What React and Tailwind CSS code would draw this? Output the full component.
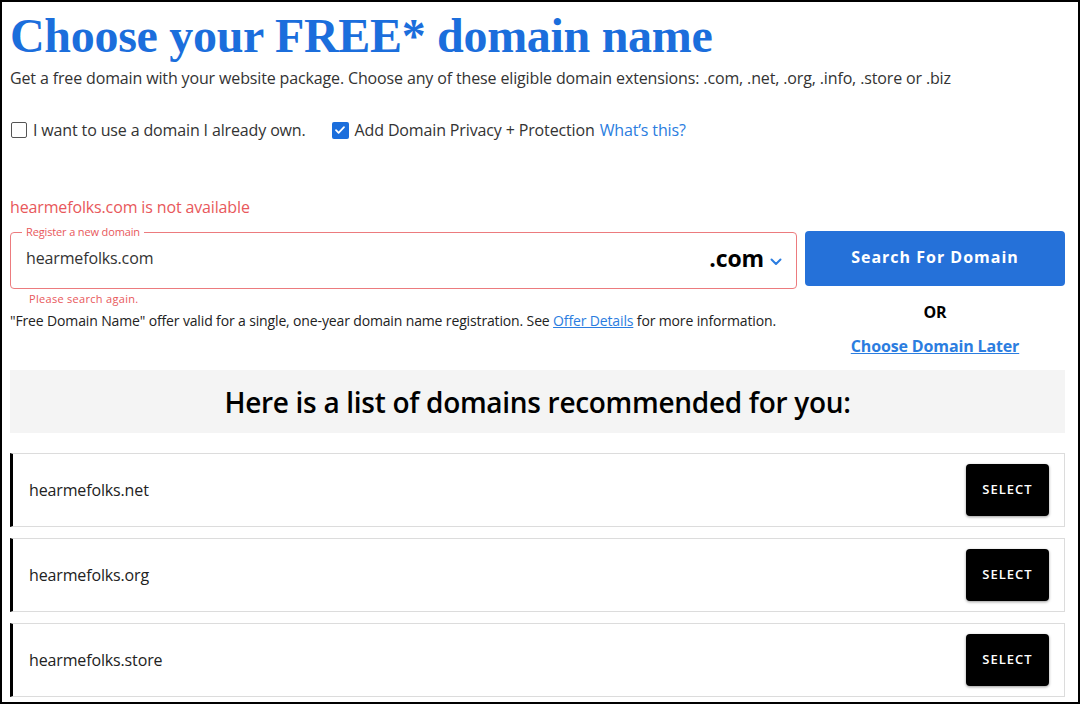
import React from "react";

const domains = ["hearmefolks.net", "hearmefolks.org", "hearmefolks.store"];

// Row for a suggested domain
const DomainRow = ({ name }) => (
  <div className="flex items-center justify-between border border-[#dcdcdc] border-l-[3px] border-l-black pl-[16px] pr-[15px] py-[10px]">
    <span className="text-[16px] text-[#222]">{name}</span>
    <button className="w-[83px] h-[52px] rounded-[4px] bg-black text-white text-[13px] font-semibold tracking-[1px] shadow-[0_1px_3px_rgba(0,0,0,0.4)]">
      SELECT
    </button>
  </div>
);

export default function App() {
  return (
    <div
      className="h-[704px] w-[1080px] overflow-hidden border-2 border-black bg-white pl-[8px] pr-[13px] text-[#333] tracking-[-0.14px]"
      style={{ fontFamily: "'Open Sans', 'Liberation Sans', sans-serif" }}
    >
      <h1
        className="mt-[6px] text-[48px] font-bold leading-[56px] text-[#1b6edc] tracking-[-0.3px]"
        style={{ fontFamily: "'Liberation Serif', serif" }}
      >
        Choose your FREE* domain name
      </h1>
      <p className="mt-[2px] text-[16px] leading-[24px]">
        Get a free domain with your website package. Choose any of these eligible domain extensions: .com, .net, .org, .info, .store or .biz
      </p>

      {/* checkboxes */}
      <div className="mt-[28px] flex items-center text-[16px] leading-[24px]">
        <label className="flex items-center">
          <span className="ml-[1px] h-[16px] w-[16px] rounded-[2px] border-[1.5px] border-[#555] bg-white" />
          <span className="ml-[6px]">I want to use a domain I already own.</span>
        </label>
        <label className="ml-[26px] flex items-center">
          <span className="flex h-[17px] w-[17px] items-center justify-center rounded-[2px] bg-[#1b6edc]">
            <svg width="12" height="12" viewBox="0 0 12 12" fill="none">
              <path d="M2 6.2l2.6 2.6L10 3.2" stroke="white" strokeWidth="1.8" strokeLinecap="round" strokeLinejoin="round" />
            </svg>
          </span>
          <span className="ml-[6px]">Add Domain Privacy + Protection</span>
          <a className="ml-[5px] text-[#2b7de0]">What’s this?</a>
        </label>
      </div>

      <p className="mt-[53px] text-[16px] leading-[24px] text-[#e8585b]">hearmefolks.com is not available</p>

      {/* search row */}
      <div className="mt-[13px] flex gap-[8px]">
        <div className="w-[787px]">
          <div className="relative flex h-[57px] items-center rounded-[4px] border border-[#ec7b7e] pb-[5px] pl-[15px] pr-[14px]">
            <span className="absolute -top-[8px] left-[11px] bg-white px-[4px] text-[11px] leading-[14px] text-[#e8585b]">
              Register a new domain
            </span>
            <span className="flex-1 text-[16px] text-[#333]">hearmefolks.com</span>
            <span className="text-[23px] font-bold text-black">.com</span>
            <svg className="ml-[6px] mt-[8px]" width="12" height="8" viewBox="0 0 12 8" fill="none">
              <path d="M1.5 1.5L6 6l4.5-4.5" stroke="#2b7de0" strokeWidth="2" strokeLinecap="round" strokeLinejoin="round" />
            </svg>
          </div>
          <p className="ml-[19px] mt-[2px] text-[11px] leading-[16px] tracking-[0.3px] text-[#e8585b]">Please search again.</p>
          <p className="mt-[4px] text-[14px] leading-[20px] text-[#222]">
            "Free Domain Name" offer valid for a single, one-year domain name registration. See{" "}
            <a className="text-[#2b7de0] underline">Offer Details</a> for more information.
          </p>
        </div>
        <div className="flex w-[260px] flex-col items-center">
          <button className="-mt-[1px] h-[55px] w-full rounded-[4px] bg-[#2571d9] pb-[3px] text-[16px] font-bold tracking-[1px] text-white">
            Search For Domain
          </button>
          <span className="mt-[15px] text-[16px] font-bold leading-[22px] text-black">OR</span>
          <a className="mt-[12px] text-[16px] font-bold leading-[22px] text-[#2b7de0] underline">Choose Domain Later</a>
        </div>
      </div>

      {/* recommendations */}
      <div className="mt-[13px] flex h-[63px] items-center justify-center bg-[#f4f4f4]">
        <h2 className="text-[28px] font-semibold text-black tracking-[-0.3px]">Here is a list of domains recommended for you:</h2>
      </div>
      <div className="mt-[20px] flex flex-col gap-[11px]">
        {domains.map((d) => (
          <DomainRow key={d} name={d} />
        ))}
      </div>
    </div>
  );
}
